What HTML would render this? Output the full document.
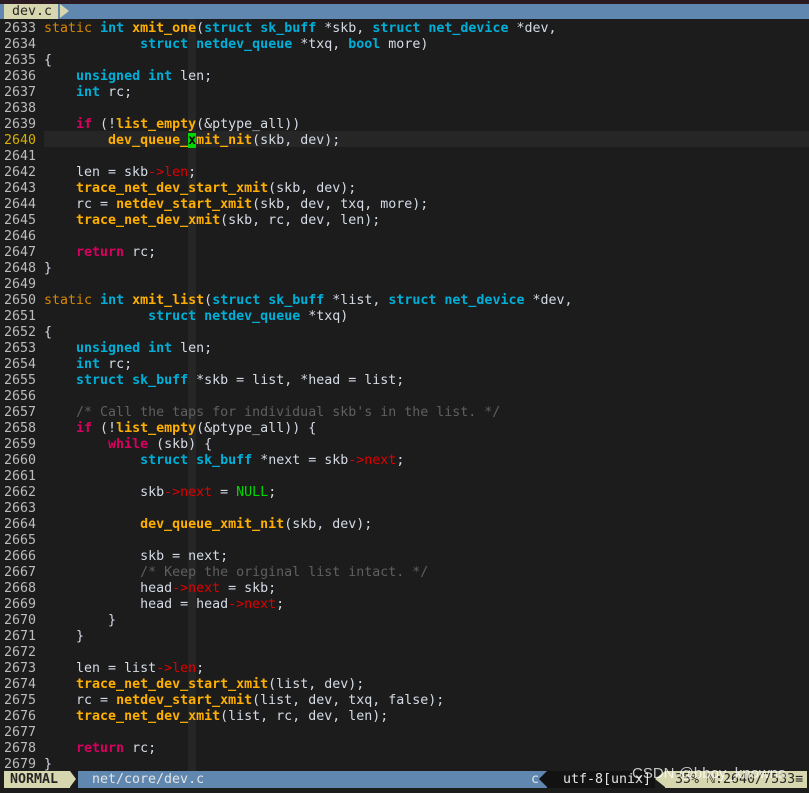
<!DOCTYPE html>
<html><head><meta charset="utf-8">
<style>
html,body{margin:0;padding:0;background:#1c1c1c;width:809px;height:793px;overflow:hidden;position:relative}
body{font-family:"DejaVu Sans Mono","Liberation Mono",monospace;font-size:13.3px;color:#d5dbe5}
.top{position:absolute;left:0;top:0;width:809px;height:4px;background:#2a1a22}
.tab{position:absolute;left:0;top:4px;width:809px;height:15px;background:#5f87af}
.tabname{position:absolute;left:4px;top:0;height:15px;padding:0 6px 0 8px;background:#d7d7af;color:#262626;line-height:15px}
.tabarr{position:absolute;left:60px;top:0;width:0;height:0;border-top:7.5px solid transparent;border-bottom:7.5px solid transparent;border-left:9px solid #d7d7af}
.ln{position:absolute;left:0;height:16px;line-height:16px;white-space:pre;width:809px}
.n{position:absolute;left:4px;top:2px;color:#bcbcbc}
.c{position:absolute;left:44px;top:2px}
.cl{position:absolute;left:44px;top:131px;width:765px;height:16px;background:#262626}
.cc{position:absolute;left:188px;top:19px;width:8px;height:752px;background:#262626}
.t{color:#00afd7;font-weight:bold}
.s{color:#d78700}
.f{color:#ffaf00;font-weight:bold}
.k{color:#d7005f;font-weight:bold}
.m{color:#e00000}
.nu{color:#00d700}
.cm{color:#5f5f5f}
.cur{background:#00d700;color:#000}
.st{position:absolute;left:0;top:771px;width:809px;height:17px;line-height:17px;background:#1c1c1c}
.seg{position:absolute;top:0;height:17px;white-space:pre}
.tri{position:absolute;top:0;width:0;height:0}
</style></head><body>
<div class="top"></div>
<div class="tab"><div class="tabname">dev.c</div><div class="tabarr"></div></div>
<div class="cc"></div>
<div class="cl"></div>
<div class="ln" style="top:19px"><span class="n">2633</span><span class="c"><span class="s">static</span> <span class="t">int</span> <span class="f">xmit_one</span>(<span class="t">struct</span> <span class="t">sk_buff</span> *skb, <span class="t">struct</span> <span class="t">net_device</span> *dev,</span></div>
<div class="ln" style="top:35px"><span class="n">2634</span><span class="c">            <span class="t">struct</span> <span class="t">netdev_queue</span> *txq, <span class="t">bool</span> more)</span></div>
<div class="ln" style="top:51px"><span class="n">2635</span><span class="c">{</span></div>
<div class="ln" style="top:67px"><span class="n">2636</span><span class="c">    <span class="t">unsigned</span> <span class="t">int</span> len;</span></div>
<div class="ln" style="top:83px"><span class="n">2637</span><span class="c">    <span class="t">int</span> rc;</span></div>
<div class="ln" style="top:99px"><span class="n">2638</span></div>
<div class="ln" style="top:115px"><span class="n">2639</span><span class="c">    <span class="k">if</span> (!<span class="f">list_empty</span>(&amp;ptype_all))</span></div>
<div class="ln" style="top:131px"><span class="n" style="color:#d7af00">2640</span><span class="c">        <span class="f">dev_queue_<span class="cur">x</span>mit_nit</span>(skb, dev);</span></div>
<div class="ln" style="top:147px"><span class="n">2641</span></div>
<div class="ln" style="top:163px"><span class="n">2642</span><span class="c">    len = skb<span class="m">-&gt;len</span>;</span></div>
<div class="ln" style="top:179px"><span class="n">2643</span><span class="c">    <span class="f">trace_net_dev_start_xmit</span>(skb, dev);</span></div>
<div class="ln" style="top:195px"><span class="n">2644</span><span class="c">    rc = <span class="f">netdev_start_xmit</span>(skb, dev, txq, more);</span></div>
<div class="ln" style="top:211px"><span class="n">2645</span><span class="c">    <span class="f">trace_net_dev_xmit</span>(skb, rc, dev, len);</span></div>
<div class="ln" style="top:227px"><span class="n">2646</span></div>
<div class="ln" style="top:243px"><span class="n">2647</span><span class="c">    <span class="k">return</span> rc;</span></div>
<div class="ln" style="top:259px"><span class="n">2648</span><span class="c">}</span></div>
<div class="ln" style="top:275px"><span class="n">2649</span></div>
<div class="ln" style="top:291px"><span class="n">2650</span><span class="c"><span class="s">static</span> <span class="t">int</span> <span class="f">xmit_list</span>(<span class="t">struct</span> <span class="t">sk_buff</span> *list, <span class="t">struct</span> <span class="t">net_device</span> *dev,</span></div>
<div class="ln" style="top:307px"><span class="n">2651</span><span class="c">             <span class="t">struct</span> <span class="t">netdev_queue</span> *txq)</span></div>
<div class="ln" style="top:323px"><span class="n">2652</span><span class="c">{</span></div>
<div class="ln" style="top:339px"><span class="n">2653</span><span class="c">    <span class="t">unsigned</span> <span class="t">int</span> len;</span></div>
<div class="ln" style="top:355px"><span class="n">2654</span><span class="c">    <span class="t">int</span> rc;</span></div>
<div class="ln" style="top:371px"><span class="n">2655</span><span class="c">    <span class="t">struct</span> <span class="t">sk_buff</span> *skb = list, *head = list;</span></div>
<div class="ln" style="top:387px"><span class="n">2656</span></div>
<div class="ln" style="top:403px"><span class="n">2657</span><span class="c">    <span class="cm">/* Call the taps for individual skb's in the list. */</span></span></div>
<div class="ln" style="top:419px"><span class="n">2658</span><span class="c">    <span class="k">if</span> (!<span class="f">list_empty</span>(&amp;ptype_all)) {</span></div>
<div class="ln" style="top:435px"><span class="n">2659</span><span class="c">        <span class="k">while</span> (skb) {</span></div>
<div class="ln" style="top:451px"><span class="n">2660</span><span class="c">            <span class="t">struct</span> <span class="t">sk_buff</span> *next = skb<span class="m">-&gt;next</span>;</span></div>
<div class="ln" style="top:467px"><span class="n">2661</span></div>
<div class="ln" style="top:483px"><span class="n">2662</span><span class="c">            skb<span class="m">-&gt;next</span> = <span class="nu">NULL</span>;</span></div>
<div class="ln" style="top:499px"><span class="n">2663</span></div>
<div class="ln" style="top:515px"><span class="n">2664</span><span class="c">            <span class="f">dev_queue_xmit_nit</span>(skb, dev);</span></div>
<div class="ln" style="top:531px"><span class="n">2665</span></div>
<div class="ln" style="top:547px"><span class="n">2666</span><span class="c">            skb = next;</span></div>
<div class="ln" style="top:563px"><span class="n">2667</span><span class="c">            <span class="cm">/* Keep the original list intact. */</span></span></div>
<div class="ln" style="top:579px"><span class="n">2668</span><span class="c">            head<span class="m">-&gt;next</span> = skb;</span></div>
<div class="ln" style="top:595px"><span class="n">2669</span><span class="c">            head = head<span class="m">-&gt;next</span>;</span></div>
<div class="ln" style="top:611px"><span class="n">2670</span><span class="c">        }</span></div>
<div class="ln" style="top:627px"><span class="n">2671</span><span class="c">    }</span></div>
<div class="ln" style="top:643px"><span class="n">2672</span></div>
<div class="ln" style="top:659px"><span class="n">2673</span><span class="c">    len = list<span class="m">-&gt;len</span>;</span></div>
<div class="ln" style="top:675px"><span class="n">2674</span><span class="c">    <span class="f">trace_net_dev_start_xmit</span>(list, dev);</span></div>
<div class="ln" style="top:691px"><span class="n">2675</span><span class="c">    rc = <span class="f">netdev_start_xmit</span>(list, dev, txq, false);</span></div>
<div class="ln" style="top:707px"><span class="n">2676</span><span class="c">    <span class="f">trace_net_dev_xmit</span>(list, rc, dev, len);</span></div>
<div class="ln" style="top:723px"><span class="n">2677</span></div>
<div class="ln" style="top:739px"><span class="n">2678</span><span class="c">    <span class="k">return</span> rc;</span></div>
<div class="ln" style="top:755px"><span class="n">2679</span><span class="c">}</span></div>
<div class="st">
  <div class="seg" style="left:4px;width:66px;background:#d7d7af;color:#262626;font-weight:bold;padding-left:6px;box-sizing:border-box">NORMAL</div>
  <div class="tri" style="left:70px;border-top:8.5px solid transparent;border-bottom:8.5px solid transparent;border-left:6px solid #d7d7af"></div>
  <div class="seg" style="left:78px;width:469px;background:#5f87af;color:#e4e4e4;padding-left:14px;box-sizing:border-box">net/core/dev.c</div>
  <div class="seg" style="left:531px;color:#e4e4e4">c</div>
  <div class="tri" style="left:547px;border-top:8.5px solid #5f87af;border-bottom:8.5px solid #5f87af;border-left:8px solid #121212"></div>
  <div class="tri" style="left:539px;border-top:8.5px solid transparent;border-bottom:8.5px solid transparent;border-right:8px solid #121212"></div>
  <div class="seg" style="left:547px;width:108px;background:#121212;color:#e4e4e4;padding-left:16px;box-sizing:border-box">utf-8[unix]</div>
  <div class="tri" style="left:655px;border-top:8.5px solid transparent;border-bottom:8.5px solid transparent;border-right:10px solid #d7d7af"></div>
  <div class="seg" style="left:665px;width:142px;background:#d7d7af;color:#262626;padding-left:10px;box-sizing:border-box">35% ℕ:2640/7533≡</div>
  <div class="seg" style="left:632px;top:-6px;color:rgba(255,255,255,0.75);font-family:'Liberation Sans',sans-serif;font-size:15px">CSDN @bboy_knowns</div>
</div>
</body></html>
